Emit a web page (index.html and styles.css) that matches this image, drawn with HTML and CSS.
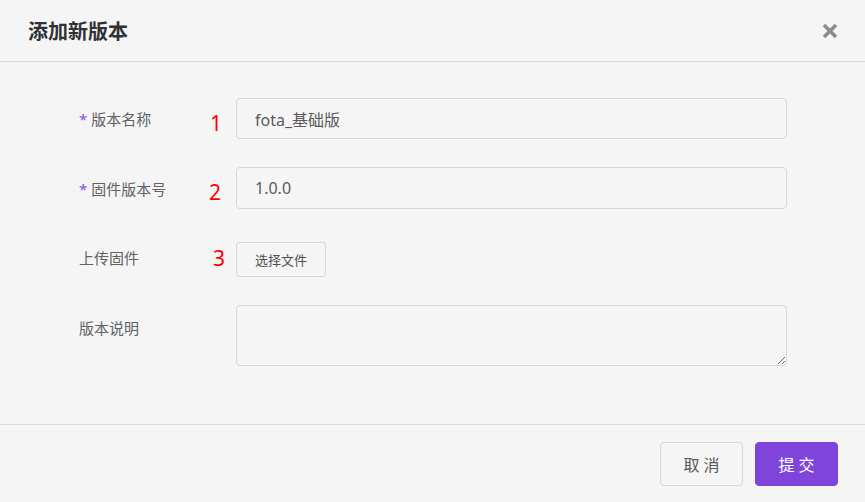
FILE: index.html
```html
<!DOCTYPE html>
<html lang="zh">
<head>
<meta charset="utf-8">
<link rel="stylesheet" href="styles.css">
</head>
<body>
<div class="dialog">
  <div class="header">
    <div class="title">添加新版本</div>
    <button class="close" aria-label="关闭">
      <svg width="16" height="16" viewBox="0 0 16 16"><path d="M2 2 L14 14 M14 2 L2 14" stroke="#8c8c8c" stroke-width="3.6" stroke-linecap="butt"/></svg>
    </button>
  </div>
  <div class="body">
    <div class="row r1">
      <label class="label"><span class="req">*</span>版本名称</label>
      <span class="mark m1">1</span>
      <input class="input" value="fota_基础版">
    </div>
    <div class="row r2">
      <label class="label"><span class="req">*</span>固件版本号</label>
      <span class="mark m2">2</span>
      <input class="input" value="1.0.0">
    </div>
    <div class="row r3">
      <label class="label">上传固件</label>
      <span class="mark m3">3</span>
      <button class="file">选择文件</button>
    </div>
    <div class="row r4">
      <label class="label top">版本说明</label>
      <textarea class="textarea"></textarea>
    </div>
  </div>
  <div class="footer">
    <button class="btn cancel">取消</button>
    <button class="btn submit">提交</button>
  </div>
</div>
</body>
</html>
```

FILE: styles.css
```css
* { box-sizing: border-box; }
html, body { margin: 0; padding: 0; }
body {
  background: #f5f5f5;
  font-family: "Noto Sans", "Noto Sans CJK SC", sans-serif;
  width: 865px;
  height: 502px;
  overflow: hidden;
}
.dialog { background: #f5f5f5; }
.header {
  height: 62px;
  border-bottom: 1px solid #dcdcdc;
  display: flex;
  align-items: center;
  justify-content: space-between;
  padding: 0 27px 0 28px;
}
.title {
  font-size: 20px;
  font-weight: 700;
  color: #303133;
  margin-top: 0;
}
.close {
  border: 0;
  background: transparent;
  padding: 0;
  width: 16px;
  height: 16px;
  display: flex;
}
.body {
  padding: 36px 0 0 79px;
  height: 362px;
}
.row {
  display: flex;
  align-items: center;
  position: relative;
}
.r1 { height: 41px; }
.r2 { height: 42px; margin-top: 28px; }
.r3 { height: 41px; margin-top: 28px; }
.r4 { align-items: flex-start; margin-top: 27px; }
.label {
  width: 157px;
  flex: none;
  font-size: 15px;
  color: #606266;
}
.label.top { padding-top: 12px; }
.req { color: #8a4fdc; margin-right: 4px; }
.mark {
  position: absolute;
  color: #ff0000;
  font-size: 21px;
  font-family: "Noto Sans", sans-serif;
  line-height: 1;
}
.m1 { left: 131px; top: 15px; }
.m2 { left: 130px; top: 15px; }
.m3 { left: 134px; top: 11px; }
.input {
  width: 551px;
  height: 100%;
  border: 1px solid #d6d6de;
  border-radius: 4px;
  background: #f5f5f5;
  padding: 0 18px;
  font-family: inherit;
  font-size: 16px;
  color: #5a5a5a;
  outline: none;
}
.file {
  width: 90px;
  height: 35px;
  border: 1px solid #d6d6de;
  border-radius: 3px;
  background: #f5f5f5;
  font-family: inherit;
  font-size: 13px;
  color: #505050;
  padding: 0;
  margin-top: 4px;
}
.textarea {
  width: 551px;
  height: 61px;
  border: 1px solid #d6d6de;
  border-radius: 4px;
  background: #f5f5f5;
  resize: vertical;
  outline: none;
  font-family: inherit;
}
.footer {
  border-top: 1px solid #dcdcdc;
  display: flex;
  justify-content: flex-end;
  gap: 12px;
  padding: 17px 27px 0 0;
}
.btn {
  width: 83px;
  height: 44px;
  border-radius: 4px;
  font-family: inherit;
  font-size: 16px;
  letter-spacing: 4px;
  padding: 0 0 0 4px;
}
.cancel {
  border: 1px solid #d6d6de;
  background: #f5f5f5;
  color: #555;
}
.submit {
  border: 1px solid #7f45da;
  background: #7f45da;
  color: #fff;
}
```
